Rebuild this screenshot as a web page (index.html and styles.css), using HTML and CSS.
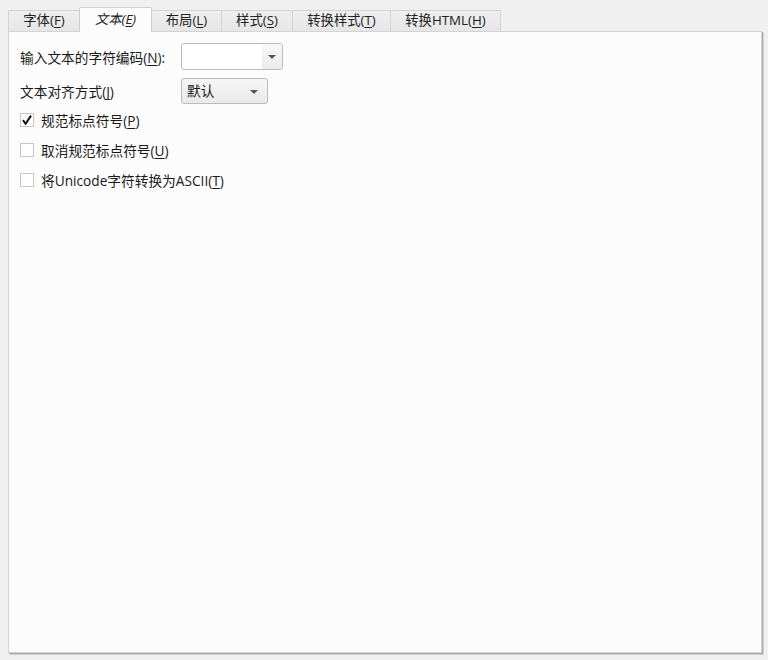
FILE: index.html
```html
<!DOCTYPE html>
<html lang="zh-CN">
<head>
<meta charset="utf-8">
<title>文本</title>
<link rel="stylesheet" href="styles.css">
</head>
<body>
<div class="dialog">
  <div class="tabs">
    <div class="tab">字体(<u>F</u>)</div>
    <div class="tab active"><i>文本(<u>E</u>)</i></div>
    <div class="tab">布局(<u>L</u>)</div>
    <div class="tab">样式(<u>S</u>)</div>
    <div class="tab">转换样式(<u>T</u>)</div>
    <div class="tab">转换HTML(<u>H</u>)</div>
  </div>
  <div class="panel">
    <div class="form">
      <label class="lbl">输入文本的字符编码(<u>N</u>):</label>
      <div class="combo edit">
        <span class="combo-text"></span>
        <span class="combo-btn"><span class="arrow"></span></span>
      </div>
      <label class="lbl">文本对齐方式(<u>J</u>)</label>
      <div class="combo drop">
        <span class="combo-text">默认</span>
        <span class="combo-btn"><span class="arrow"></span></span>
      </div>
    </div>
    <div class="checks">
      <div class="check-row">
        <span class="box"><svg width="14" height="14" viewBox="0 0 14 14"><path d="M3 7.2 L5.6 10.8 L11 2.6" fill="none" stroke="#111" stroke-width="2"/></svg></span>
        <span>规范标点符号(<u>P</u>)</span>
      </div>
      <div class="check-row">
        <span class="box"></span>
        <span>取消规范标点符号(<u>U</u>)</span>
      </div>
      <div class="check-row">
        <span class="box"></span>
        <span>将Unicode字符转换为ASCII(<u>T</u>)</span>
      </div>
    </div>
  </div>
</div>
</body>
</html>
```

FILE: styles.css
```css
html, body {
  margin: 0;
  padding: 0;
  background: #f0f0f0;
}
body {
  font-family: "Open Sans", "Noto Sans CJK SC", "Liberation Sans", sans-serif;
  font-size: 13.7px;
  color: #1a1a1a;
  width: 768px;
  height: 660px;
  overflow: hidden;
}
u { text-decoration: underline; text-underline-offset: 2px; }
.dialog {
  padding: 7px 0 0 8px;
}
.tabs {
  display: flex;
  align-items: flex-end;
  height: 25px;
  position: relative;
  z-index: 2;
  margin-bottom: -1px;
  font-size: 13.33px;
}
.tab {
  box-sizing: border-box;
  height: 21px;
  line-height: 19px;
  text-align: center;
  background: linear-gradient(#efefef, #e6e6e6);
  border: 1px solid #d2d2d2;
  border-bottom: none;
  border-radius: 2px 2px 0 0;
  margin-left: -1px;
  margin-bottom: 1px;
  white-space: nowrap;
  color: #222;
}
.tab:first-child { margin-left: 0; width: 72px; }
.tab:nth-child(2) { width: 73px; }
.tab:nth-child(3) { width: 71px; }
.tab:nth-child(4) { width: 72px; }
.tab:nth-child(5) { width: 99px; }
.tab:nth-child(6) { width: 111px; }
.tab.active {
  height: 25px;
  line-height: 23px;
  background: #fcfcfc;
  margin-bottom: 0;
  z-index: 3;
  border-color: #cfcfcf;
}
.tab.active i { font-style: italic; }
.panel {
  width: 741px;
  height: 609px;
  background: #fcfcfc;
  border: 1px solid #d3d3d3;
  box-shadow: 1px 1px 0 #a9a9a9, 2px 2px 0 #d0d0d0;
  padding: 11px 0 0 11px;
  box-sizing: content-box;
  position: relative;
  z-index: 1;
}
.form {
  display: grid;
  grid-template-columns: 161px auto;
  row-gap: 8px;
  align-items: center;
  justify-items: start;
}
.lbl { white-space: nowrap; }
.combo {
  display: flex;
  box-sizing: border-box;
  border: 1px solid #bcbcbc;
  border-radius: 3px;
  align-items: stretch;
}
.combo.edit {
  width: 102px;
  height: 27px;
  background: #fff;
}
.combo.edit .combo-text { flex: 1; }
.combo.edit .combo-btn {
  width: 20px;
  background: linear-gradient(#f7f7f7, #ebebeb);
  border-radius: 0 2px 2px 0;
}
.combo.drop {
  width: 87px;
  height: 26px;
  background: linear-gradient(#f6f6f6, #e9e9e9);
}
.combo.drop .combo-text {
  flex: 1;
  padding-left: 5px;
  line-height: 24px;
}
.combo.drop .combo-btn { width: 27px; }
.combo-btn {
  display: flex;
  align-items: center;
  justify-content: center;
}
.arrow {
  width: 0;
  height: 0;
  border-left: 4px solid transparent;
  border-right: 4px solid transparent;
  border-top: 4px solid #555;
  margin-top: 1px;
}
.checks {
  margin-top: 1px;
  display: flex;
  flex-direction: column;
}
.check-row {
  display: flex;
  align-items: center;
  height: 30px;
  gap: 7px;
  white-space: nowrap;
}
.box {
  width: 14px;
  height: 14px;
  box-sizing: border-box;
  border: 1px solid #c6c6c6;
  background: #fff;
  position: relative;
  display: block;
}
.box svg {
  position: absolute;
  left: -1px;
  top: -1px;
}
```
